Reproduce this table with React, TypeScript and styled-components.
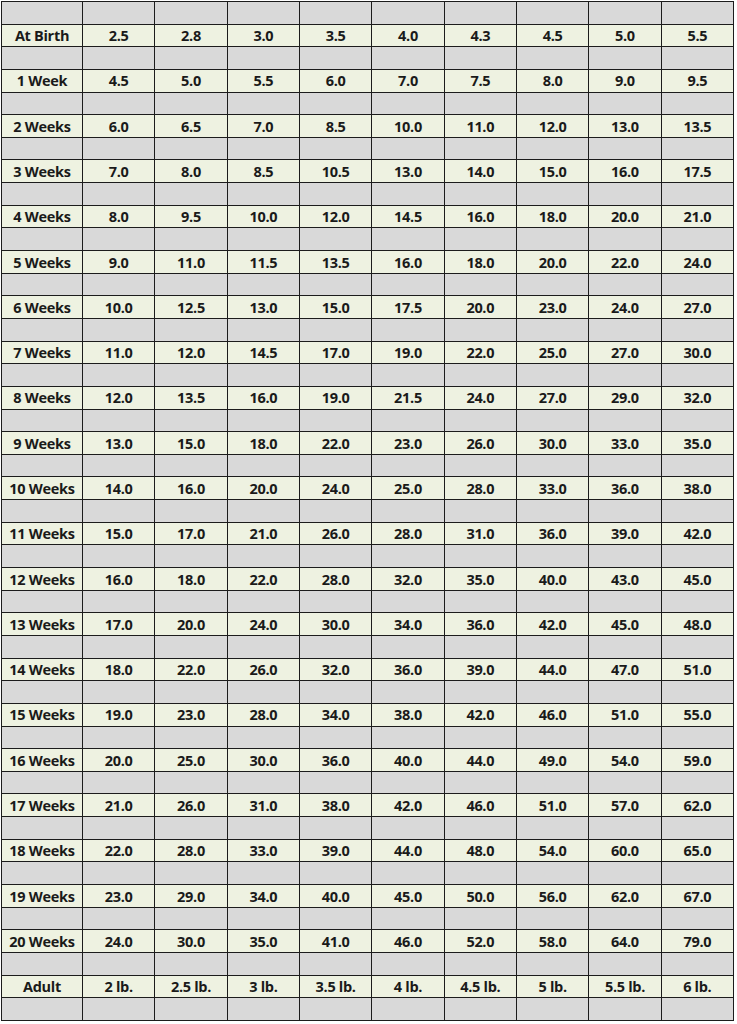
import { Fragment } from "react"
import styled, { createGlobalStyle } from "styled-components"

const Global = createGlobalStyle`
body{
    margin: 0;
    background: #ffffff;
}
`

const rows: [string, string[]][] = [
    ["At Birth", ["2.5", "2.8", "3.0", "3.5", "4.0", "4.3", "4.5", "5.0", "5.5"]],
    ["1 Week", ["4.5", "5.0", "5.5", "6.0", "7.0", "7.5", "8.0", "9.0", "9.5"]],
    ["2 Weeks", ["6.0", "6.5", "7.0", "8.5", "10.0", "11.0", "12.0", "13.0", "13.5"]],
    ["3 Weeks", ["7.0", "8.0", "8.5", "10.5", "13.0", "14.0", "15.0", "16.0", "17.5"]],
    ["4 Weeks", ["8.0", "9.5", "10.0", "12.0", "14.5", "16.0", "18.0", "20.0", "21.0"]],
    ["5 Weeks", ["9.0", "11.0", "11.5", "13.5", "16.0", "18.0", "20.0", "22.0", "24.0"]],
    ["6 Weeks", ["10.0", "12.5", "13.0", "15.0", "17.5", "20.0", "23.0", "24.0", "27.0"]],
    ["7 Weeks", ["11.0", "12.0", "14.5", "17.0", "19.0", "22.0", "25.0", "27.0", "30.0"]],
    ["8 Weeks", ["12.0", "13.5", "16.0", "19.0", "21.5", "24.0", "27.0", "29.0", "32.0"]],
    ["9 Weeks", ["13.0", "15.0", "18.0", "22.0", "23.0", "26.0", "30.0", "33.0", "35.0"]],
    ["10 Weeks", ["14.0", "16.0", "20.0", "24.0", "25.0", "28.0", "33.0", "36.0", "38.0"]],
    ["11 Weeks", ["15.0", "17.0", "21.0", "26.0", "28.0", "31.0", "36.0", "39.0", "42.0"]],
    ["12 Weeks", ["16.0", "18.0", "22.0", "28.0", "32.0", "35.0", "40.0", "43.0", "45.0"]],
    ["13 Weeks", ["17.0", "20.0", "24.0", "30.0", "34.0", "36.0", "42.0", "45.0", "48.0"]],
    ["14 Weeks", ["18.0", "22.0", "26.0", "32.0", "36.0", "39.0", "44.0", "47.0", "51.0"]],
    ["15 Weeks", ["19.0", "23.0", "28.0", "34.0", "38.0", "42.0", "46.0", "51.0", "55.0"]],
    ["16 Weeks", ["20.0", "25.0", "30.0", "36.0", "40.0", "44.0", "49.0", "54.0", "59.0"]],
    ["17 Weeks", ["21.0", "26.0", "31.0", "38.0", "42.0", "46.0", "51.0", "57.0", "62.0"]],
    ["18 Weeks", ["22.0", "28.0", "33.0", "39.0", "44.0", "48.0", "54.0", "60.0", "65.0"]],
    ["19 Weeks", ["23.0", "29.0", "34.0", "40.0", "45.0", "50.0", "56.0", "62.0", "67.0"]],
    ["20 Weeks", ["24.0", "30.0", "35.0", "41.0", "46.0", "52.0", "58.0", "64.0", "79.0"]],
    ["Adult", ["2 lb.", "2.5 lb.", "3 lb.", "3.5 lb.", "4 lb.", "4.5 lb.", "5 lb.", "5.5 lb.", "6 lb."]],
]

const SpacerRow = () => (
    <Row bg="#d9d9d9">
        {Array.from({ length: 10 }).map((_, i) => <Cell key={i} />)}
    </Row>
)

const App = () => {
    return (
        <Page>
            <Global />
            <Table>
                <colgroup>
                    <col style={{ width: 81 }} />
                    {Array.from({ length: 9 }).map((_, i) => <col key={i} />)}
                </colgroup>
                <tbody>
                    <SpacerRow />
                    {rows.map(([label, vals]) => (
                        <Fragment key={label}>
                            <Row bg="#eef2e1">
                                <Cell>{label}</Cell>
                                {vals.map((v, i) => <Cell key={i}>{v}</Cell>)}
                            </Row>
                            <SpacerRow />
                        </Fragment>
                    ))}
                </tbody>
            </Table>
        </Page>
    )
}

export default App

const Page = styled.div`
padding: 1px 0 0 1px;
width: 737px;
box-sizing: border-box;
`
const Table = styled.table`
width: 733px;
height: 1020px;
border-collapse: collapse;
table-layout: fixed;
font-family: "Open Sans", "Liberation Sans", sans-serif;
font-weight: 700;
font-size: 14.5px;
color: #1a1a1a;
`
const Row = styled.tr<{ bg: string }>`
background-color: ${({ bg }) => bg};
height: 22.6px;
`
const Cell = styled.td`
border: 1.5px solid #1c1c1c;
text-align: center;
padding: 2px 0 0 0;
line-height: 1;
white-space: nowrap;
letter-spacing: -0.3px;
`
